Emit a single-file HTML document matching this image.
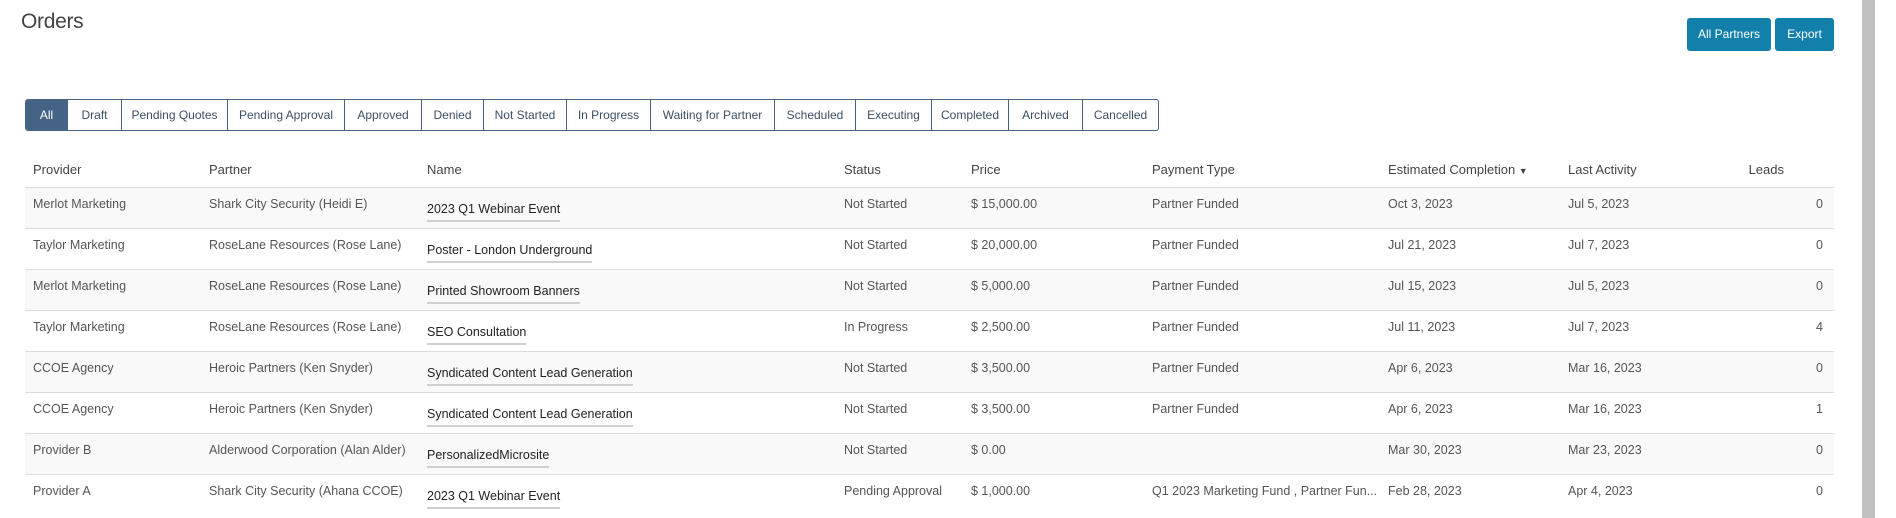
<!DOCTYPE html>
<html><head><meta charset="utf-8"><style>
*{box-sizing:border-box;margin:0;padding:0}
body{width:1896px;height:518px;background:#fff;font-family:"Liberation Sans",sans-serif;position:relative;overflow:hidden;color:#555}
h1{position:absolute;left:21px;top:10px;font-size:21px;font-weight:normal;color:#444;letter-spacing:-0.3px}
.btn{position:absolute;top:18px;height:33px;background:#1380ab;color:#fff;font-size:12px;line-height:33px;text-align:center;border-radius:3px}
.tabs{position:absolute;left:25px;top:99px;height:32px;display:flex;border:1px solid #456384;border-radius:3px;overflow:hidden}
.tabs div{font-size:12px;color:#3d4f63;line-height:30px;text-align:center;border-left:1px solid #456384;white-space:nowrap}
.tabs div:first-child{border-left:none;background:#456384;color:#fff}
.scroll{position:absolute;left:1862px;top:0;width:13px;height:518px;background:#c1c1c1}
table{position:absolute;left:25px;top:152px;width:1809px;border-collapse:collapse;font-size:12.5px}
th{text-align:left;font-weight:normal;color:#444;height:35px;padding:0 0 0 8px;font-size:13px}
td{height:41px;border-top:1px solid #ddd;padding:0 0 7px 8px;white-space:nowrap}
tbody tr:nth-child(odd){background:#f9f9f9}
td.n span{display:inline-block;color:#222;padding:11px 0 4px 0;border-bottom:2px solid #d0d0d0}
td.n{padding-left:8px;padding-bottom:3px}
.r{text-align:right;padding-right:11px}
</style></head><body>
<h1>Orders</h1>
<div class="btn" style="left:1687px;width:84px">All Partners</div>
<div class="btn" style="left:1775px;width:59px">Export</div>
<div class="tabs">
<div style="width:41px">All</div><div style="width:54px">Draft</div><div style="width:106px">Pending Quotes</div><div style="width:117px">Pending Approval</div><div style="width:77px">Approved</div><div style="width:62px">Denied</div><div style="width:83px">Not Started</div><div style="width:84px">In Progress</div><div style="width:124px">Waiting for Partner</div><div style="width:81px">Scheduled</div><div style="width:76px">Executing</div><div style="width:77px">Completed</div><div style="width:74px">Archived</div><div style="width:76px">Cancelled</div>
</div>
<table>
<colgroup><col style="width:176px"><col style="width:218px"><col style="width:417px"><col style="width:127px"><col style="width:181px"><col style="width:236px"><col style="width:180px"><col style="width:176px"><col></colgroup>
<thead><tr><th>Provider</th><th>Partner</th><th style="padding-left:8px">Name</th><th>Status</th><th>Price</th><th>Payment Type</th><th>Estimated Completion <span style="font-size:9px">▼</span></th><th>Last Activity</th><th class="r" style="padding-right:50px">Leads</th></tr></thead>
<tbody>
<tr><td>Merlot Marketing</td><td>Shark City Security (Heidi E)</td><td class="n"><span>2023 Q1 Webinar Event</span></td><td>Not Started</td><td>$ 15,000.00</td><td>Partner Funded</td><td>Oct 3, 2023</td><td>Jul 5, 2023</td><td class="r">0</td></tr>
<tr><td>Taylor Marketing</td><td>RoseLane Resources (Rose Lane)</td><td class="n"><span>Poster - London Underground</span></td><td>Not Started</td><td>$ 20,000.00</td><td>Partner Funded</td><td>Jul 21, 2023</td><td>Jul 7, 2023</td><td class="r">0</td></tr>
<tr><td>Merlot Marketing</td><td>RoseLane Resources (Rose Lane)</td><td class="n"><span>Printed Showroom Banners</span></td><td>Not Started</td><td>$ 5,000.00</td><td>Partner Funded</td><td>Jul 15, 2023</td><td>Jul 5, 2023</td><td class="r">0</td></tr>
<tr><td>Taylor Marketing</td><td>RoseLane Resources (Rose Lane)</td><td class="n"><span>SEO Consultation</span></td><td>In Progress</td><td>$ 2,500.00</td><td>Partner Funded</td><td>Jul 11, 2023</td><td>Jul 7, 2023</td><td class="r">4</td></tr>
<tr><td>CCOE Agency</td><td>Heroic Partners (Ken Snyder)</td><td class="n"><span>Syndicated Content Lead Generation</span></td><td>Not Started</td><td>$ 3,500.00</td><td>Partner Funded</td><td>Apr 6, 2023</td><td>Mar 16, 2023</td><td class="r">0</td></tr>
<tr><td>CCOE Agency</td><td>Heroic Partners (Ken Snyder)</td><td class="n"><span>Syndicated Content Lead Generation</span></td><td>Not Started</td><td>$ 3,500.00</td><td>Partner Funded</td><td>Apr 6, 2023</td><td>Mar 16, 2023</td><td class="r">1</td></tr>
<tr><td>Provider B</td><td>Alderwood Corporation (Alan Alder)</td><td class="n"><span>PersonalizedMicrosite</span></td><td>Not Started</td><td>$ 0.00</td><td></td><td>Mar 30, 2023</td><td>Mar 23, 2023</td><td class="r">0</td></tr>
<tr><td>Provider A</td><td>Shark City Security (Ahana CCOE)</td><td class="n"><span>2023 Q1 Webinar Event</span></td><td>Pending Approval</td><td>$ 1,000.00</td><td>Q1 2023 Marketing Fund , Partner Fun...</td><td>Feb 28, 2023</td><td>Apr 4, 2023</td><td class="r">0</td></tr>
</tbody></table>
<div class="scroll"></div>
</body></html>
